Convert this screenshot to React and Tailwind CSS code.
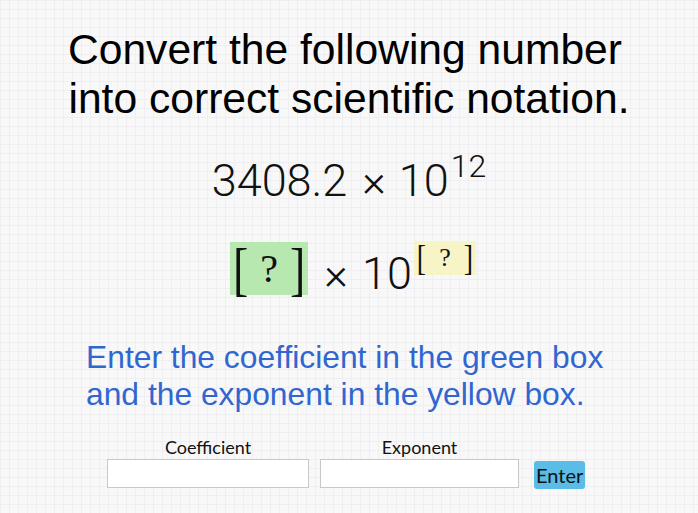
import React from 'react';

const mathSans = { fontFamily: 'Roboto, "Open Sans", sans-serif' };

const App = () => {
  return (
    <div className="relative h-[513px] w-[698px] overflow-hidden bg-[#f8f8f9] bg-[linear-gradient(#efeff1_1px,transparent_1px),linear-gradient(90deg,#efeff1_1px,transparent_1px)] bg-[size:9px_9px]">
      {/* Question */}
      <h1 className="pt-[25px] text-center font-['Liberation_Sans',Arial,sans-serif] text-[42.6px] leading-[49px] text-black">
        <span className="relative left-[-4px]">Convert the following number</span>
        <br />
        into correct scientific notation.
      </h1>

      {/* Given number */}
      <div className="mt-[30px] flex items-start justify-center text-[45px] font-light leading-[56px] text-[#111]" style={mathSans}>
        <span>3408.2</span>
        <span className="ml-[15px] mr-[13px]">×</span>
        <span>10</span>
        <span className="ml-[2px] mt-[-7px] text-[32px] leading-[40px]">12</span>
      </div>

      {/* Answer template */}
      <div className="mt-[33px] flex items-start justify-center pl-[8px] text-[45px] leading-[56px] text-[#111]">
        <span className="flex h-[53px] items-center bg-[#b6e8b0] px-[3px] font-['Liberation_Serif',serif] text-[46px]">
          <span className="scale-y-[1.3]">[</span>
          <span className="mx-[12px] text-[40px]">?</span>
          <span className="scale-y-[1.3]">]</span>
        </span>
        <span className="ml-[16px] mr-[14px] mt-[4px] font-light" style={mathSans}>×</span>
        <span className="mt-[4px] font-light" style={mathSans}>10</span>
        <span className="ml-[2px] mt-[-1px] flex h-[34px] items-center bg-[#f7f5c8] px-[3px] font-['Liberation_Serif',serif] text-[28px] leading-none">
          <span className="scale-y-[1.3]">[</span>
          <span className="mx-[13px] text-[26px]">?</span>
          <span className="scale-y-[1.3]">]</span>
        </span>
      </div>

      {/* Instructions */}
      <p className="mt-[37px] pl-[86px] font-['Liberation_Sans',Arial,sans-serif] text-[31.8px] leading-[37px] text-[#3166cf]">
        Enter the coefficient in the green box
        <br />
        and the exponent in the yellow box.
      </p>

      {/* Answer inputs */}
      <div className="mt-[23px] flex items-end pl-[107px] font-['Lato',sans-serif]">
        <label className="flex w-[202px] flex-col items-center">
          <span className="mb-[1px] text-[18px] leading-[22px] text-[#111]">Coefficient</span>
          <input className="h-[29px] w-full border border-[#c8c8c8] bg-white" />
        </label>
        <label className="ml-[11px] flex w-[199px] flex-col items-center">
          <span className="mb-[1px] text-[18px] leading-[22px] text-[#111]">Exponent</span>
          <input className="h-[29px] w-full border border-[#c8c8c8] bg-white" />
        </label>
        <button className="mb-[-1px] ml-[15px] h-[28px] rounded-[3px] bg-[#5bbde6] px-[2px] text-[20px] leading-[28px] text-[#111]">
          Enter
        </button>
      </div>
    </div>
  );
};

export default App;
